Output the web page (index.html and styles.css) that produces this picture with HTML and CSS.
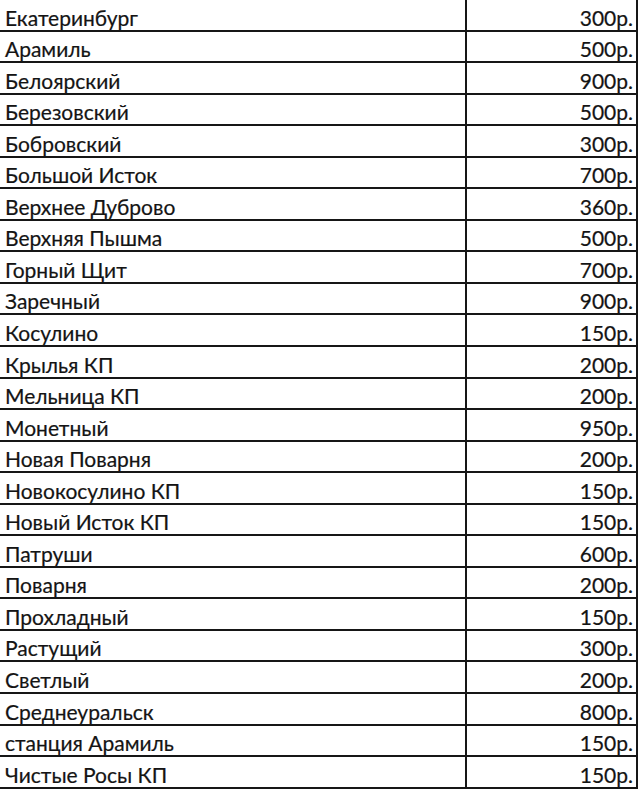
FILE: index.html
```html
<!DOCTYPE html>
<html lang="ru">
<head>
<meta charset="utf-8">
<title>Цены доставки</title>
<link rel="stylesheet" href="styles.css">
</head>
<body>
<div class="sheet">
  <div class="cell name">Екатеринбург</div><div class="cell price">300р.</div>
  <div class="cell name">Арамиль</div><div class="cell price">500р.</div>
  <div class="cell name">Белоярский</div><div class="cell price">900р.</div>
  <div class="cell name">Березовский</div><div class="cell price">500р.</div>
  <div class="cell name">Бобровский</div><div class="cell price">300р.</div>
  <div class="cell name">Большой Исток</div><div class="cell price">700р.</div>
  <div class="cell name">Верхнее Дуброво</div><div class="cell price">360р.</div>
  <div class="cell name">Верхняя Пышма</div><div class="cell price">500р.</div>
  <div class="cell name">Горный Щит</div><div class="cell price">700р.</div>
  <div class="cell name">Заречный</div><div class="cell price">900р.</div>
  <div class="cell name">Косулино</div><div class="cell price">150р.</div>
  <div class="cell name">Крылья КП</div><div class="cell price">200р.</div>
  <div class="cell name">Мельница КП</div><div class="cell price">200р.</div>
  <div class="cell name">Монетный</div><div class="cell price">950р.</div>
  <div class="cell name">Новая Поварня</div><div class="cell price">200р.</div>
  <div class="cell name">Новокосулино КП</div><div class="cell price">150р.</div>
  <div class="cell name">Новый Исток КП</div><div class="cell price">150р.</div>
  <div class="cell name">Патруши</div><div class="cell price">600р.</div>
  <div class="cell name">Поварня</div><div class="cell price">200р.</div>
  <div class="cell name">Прохладный</div><div class="cell price">150р.</div>
  <div class="cell name">Растущий</div><div class="cell price">300р.</div>
  <div class="cell name">Светлый</div><div class="cell price">200р.</div>
  <div class="cell name">Среднеуральск</div><div class="cell price">800р.</div>
  <div class="cell name">станция Арамиль</div><div class="cell price">150р.</div>
  <div class="cell name">Чистые Росы КП</div><div class="cell price">150р.</div>
</div>
</body>
</html>
```
FILE: styles.css
```css
html, body {
  margin: 0;
  padding: 0;
  background: #ffffff;
}
body {
  width: 640px;
  height: 790px;
  overflow: hidden;
}
.sheet {
  display: grid;
  grid-template-columns: 467px 171px;
  grid-auto-rows: 31.56px;
  font-family: Lato, "Open Sans", sans-serif;
  font-size: 21px;
  line-height: 1;
  color: #141414;
  -webkit-text-stroke: 0.2px #141414;
}
.cell {
  box-sizing: border-box;
  display: flex;
  align-items: flex-end;
  border-bottom: 2px solid #161616;
  border-right: 2px solid #161616;
  padding-bottom: 2px;
  white-space: nowrap;
}
.name {
  padding-left: 5px;
}
.price {
  justify-content: flex-end;
  padding-right: 3px;
}
```
